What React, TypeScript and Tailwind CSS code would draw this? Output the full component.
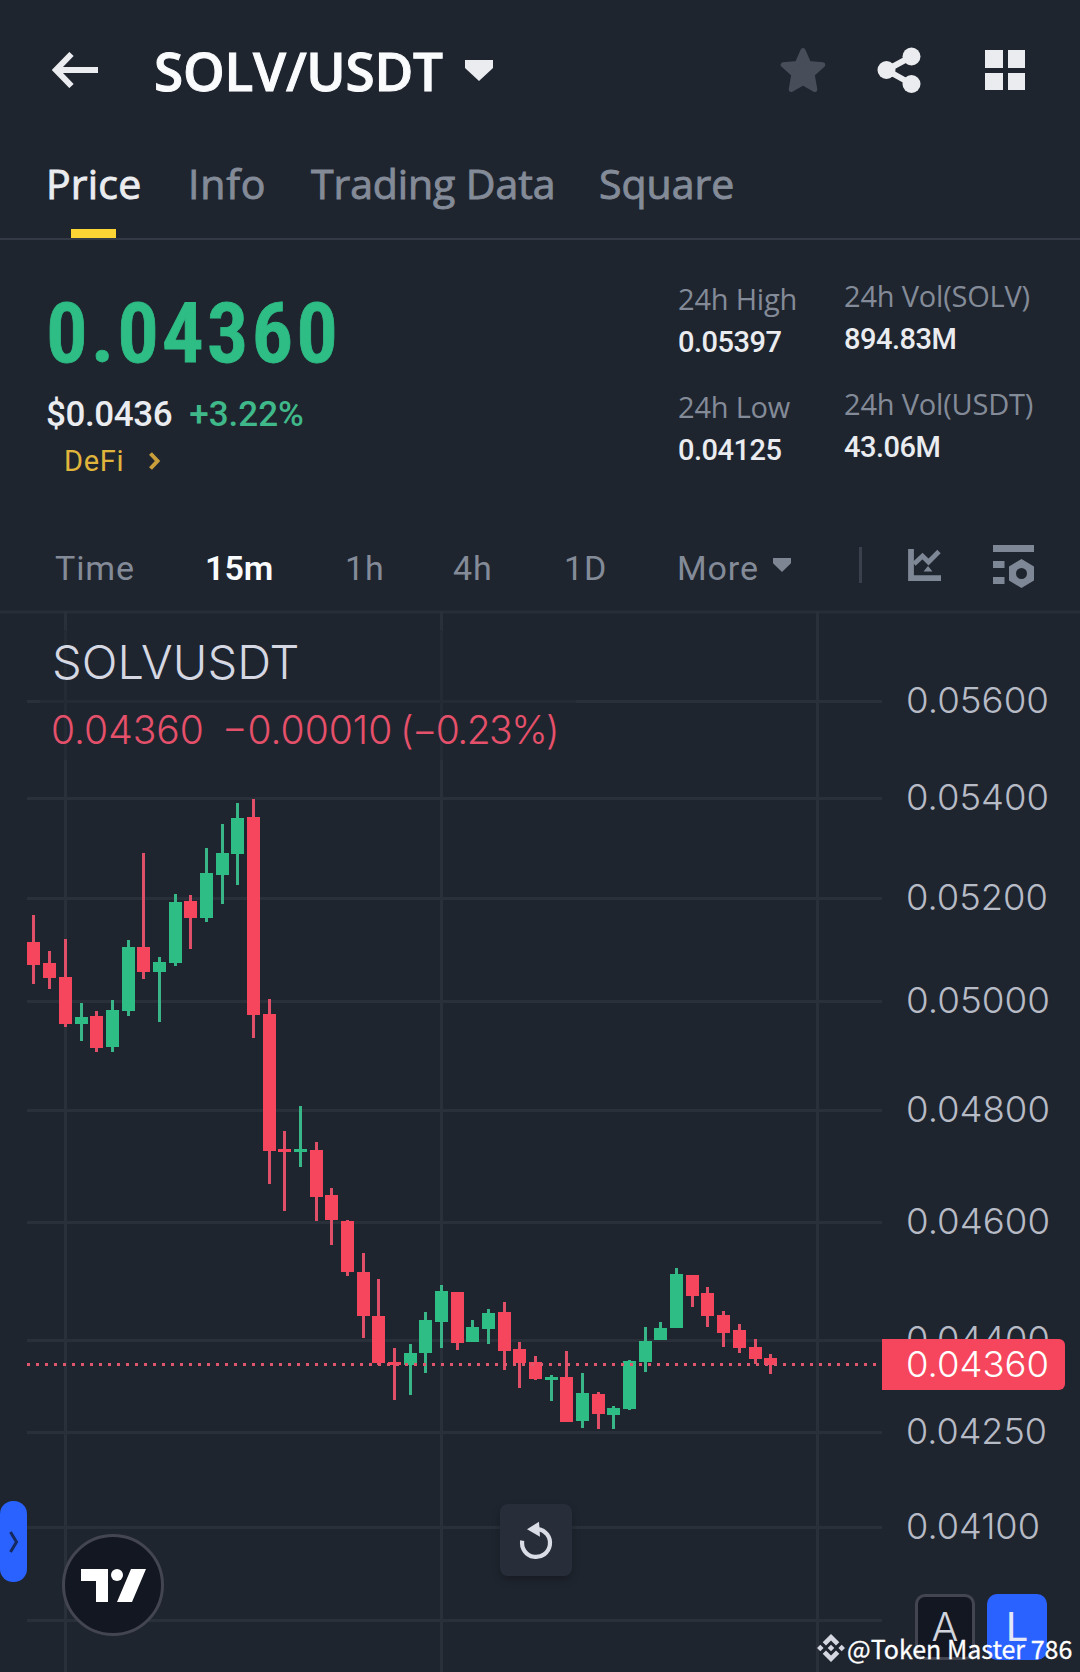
import React from "react";

type Candle = [number, "r" | "g", number, number, number, number];

// center x, direction, high, body top, body bottom, low
const candles: Candle[] = [
  [33.5, "r", 915, 942, 965, 984],
  [49.5, "r", 951, 963, 978, 989],
  [65.5, "r", 939, 977, 1024, 1027],
  [81.5, "g", 1003, 1017, 1024, 1041],
  [96.5, "r", 1011, 1016, 1048, 1052],
  [112.5, "g", 1000, 1010, 1047, 1052],
  [128.5, "g", 940, 947, 1011, 1016],
  [143.5, "r", 853, 947, 972, 979],
  [159.5, "g", 957, 962, 972, 1022],
  [175.5, "g", 894, 902, 963, 966],
  [190.5, "r", 895, 901, 918, 949],
  [206.5, "g", 848, 873, 918, 922],
  [222.5, "g", 824, 853, 875, 904],
  [237.5, "g", 803, 818, 854, 885],
  [253.5, "r", 799, 817, 1015, 1038],
  [269.5, "r", 999, 1014, 1151, 1184],
  [284.5, "r", 1131, 1149, 1152, 1211],
  [300.5, "g", 1106, 1149, 1152, 1167],
  [316.5, "r", 1142, 1150, 1197, 1221],
  [331.5, "r", 1188, 1195, 1220, 1245],
  [347.5, "r", 1220, 1221, 1272, 1276],
  [363.5, "r", 1253, 1272, 1316, 1338],
  [378.5, "r", 1279, 1316, 1363, 1365],
  [394.5, "r", 1348, 1362, 1365, 1400],
  [410.5, "g", 1344, 1353, 1365, 1395],
  [425.5, "g", 1312, 1320, 1353, 1373],
  [441.5, "g", 1285, 1291, 1322, 1348],
  [457.5, "r", 1292, 1292, 1343, 1350],
  [472.5, "g", 1320, 1327, 1342, 1342],
  [488.5, "g", 1309, 1313, 1329, 1344],
  [504.5, "r", 1302, 1312, 1351, 1370],
  [519.5, "r", 1342, 1349, 1363, 1388],
  [535.5, "r", 1356, 1362, 1379, 1380],
  [551.5, "g", 1375, 1377, 1380, 1401],
  [566.5, "r", 1351, 1377, 1422, 1422],
  [582.5, "g", 1373, 1393, 1421, 1428],
  [598.5, "r", 1392, 1394, 1414, 1429],
  [613.5, "g", 1406, 1408, 1415, 1429],
  [629.5, "g", 1360, 1361, 1409, 1410],
  [645.5, "g", 1327, 1341, 1362, 1372],
  [660.5, "g", 1322, 1328, 1340, 1340],
  [676.5, "g", 1268, 1274, 1328, 1328],
  [692.5, "r", 1275, 1275, 1296, 1307],
  [707.5, "r", 1287, 1293, 1316, 1327],
  [723.5, "r", 1311, 1315, 1333, 1347],
  [739.5, "r", 1324, 1330, 1348, 1353],
  [755.5, "r", 1339, 1347, 1359, 1364],
  [770.5, "r", 1354, 1358, 1365, 1374],
];

const levels: { y: number; label?: string; w?: number }[] = [
  { y: 701, label: "0.05600", w: 143 },
  { y: 798.5, label: "0.05400", w: 143 },
  { y: 898.5, label: "0.05200", w: 142 },
  { y: 1001.5, label: "0.05000", w: 144 },
  { y: 1110.5, label: "0.04800", w: 144 },
  { y: 1222.5, label: "0.04600", w: 144 },
  { y: 1340.5, label: "0.04400", w: 144 },
  { y: 1432.5, label: "0.04250", w: 141 },
  { y: 1527.5, label: "0.04100", w: 134 },
  { y: 1620 },
];

function Caret({ className }: { className: string }) {
  return (
    <svg viewBox="0 0 28 21" className={className} fill="currentColor" preserveAspectRatio="none">
      <path d="M0 0H28V8L14 21L0 8Z" />
    </svg>
  );
}

function Header() {
  return (
    <header className="flex h-[140px] items-center pl-[52px] pr-[55px]">
      <svg viewBox="0 0 46 36" className="h-9 w-[46px] shrink-0" fill="none" stroke="#eaecef" strokeWidth="6">
        <path d="M19.5 2L4 18L19.5 34M4 18H46" />
      </svg>
      <h1 className="ml-[56px] w-[311px] whitespace-nowrap pt-px font-['Open_Sans'] text-[53px] font-semibold leading-[72px] tracking-[-0.2px] text-[#fafbfd] [-webkit-text-stroke:1px_#fafbfd]">
        SOLV/USDT
      </h1>
      <Caret className="h-[21px] w-7 text-[#eaecef]" />
      <div className="ml-auto flex items-center">
        <svg viewBox="0 0 46 46" className="h-[46px] w-[46px]" fill="#474d59" stroke="#474d59" strokeWidth="5" strokeLinejoin="round">
          <path d="M23 3.5L28.7 16.4L42.8 17.8L32.2 27.3L34.8 42.5L23 35.8L11.2 42.5L13.8 27.3L3.2 17.8L17.3 16.4Z" />
        </svg>
        <svg viewBox="0 0 44 46" className="ml-[51px] h-[46px] w-11" fill="#eaecef">
          <path d="M34.5 9.5L9.5 23L34.5 37" fill="none" stroke="#eaecef" strokeWidth="6" />
          <circle cx="34.5" cy="9.5" r="9" />
          <circle cx="9.5" cy="23" r="9" />
          <circle cx="34.5" cy="37" r="9" />
        </svg>
        <div className="ml-[64px] grid h-10 w-10 grid-cols-2 gap-[5px]">
          <i className="bg-[#eaecef]" />
          <i className="bg-[#eaecef]" />
          <i className="bg-[#eaecef]" />
          <i className="bg-[#eaecef]" />
        </div>
      </div>
    </header>
  );
}

function Tabs() {
  return (
    <nav className="flex h-[100px] border-b-2 border-[#333a46] pl-[46px] font-['Open_Sans'] text-[41px] font-normal leading-[87px] text-[#848b98] [-webkit-text-stroke:0.9px_currentColor]">
      <div className="flex w-[142px] flex-col whitespace-nowrap text-[#eaecef]">
        <span className="h-[89px] tracking-[0.2px]">Price</span>
        <i className="ml-[25px] h-[9px] w-[45px] bg-[#fcd535]" />
      </div>
      <span className="w-[123px] tracking-[0.8px]">Info</span>
      <span className="w-[288px] whitespace-nowrap tracking-[-0.1px]">Trading Data</span>
      <span>Square</span>
    </nav>
  );
}

function Stat({ label, value }: { label: string; value: string }) {
  return (
    <div className="h-[108px] whitespace-nowrap">
      <div className="font-['Open_Sans'] text-[29px] leading-10 tracking-[-0.2px] text-[#848b98]">{label}</div>
      <div className="mt-[3px] font-[Roboto] text-[29px] font-medium leading-10 tracking-[-0.5px] text-[#eaecef]">{value}</div>
    </div>
  );
}

function Summary() {
  return (
    <section className="flex h-[286px] pl-[46px]">
      <div className="w-[632px] pt-[50px] font-[Roboto]">
        <div className="text-[83px] font-semibold leading-[88px] tracking-[3px] text-[#2ebd85] [font-stretch:75%] [-webkit-text-stroke:0.8px_#2ebd85]">0.04360</div>
        <div className="mt-[15px] flex gap-[17px] text-[35px] font-medium leading-[44px] tracking-[-0.4px]">
          <span className="text-[#eaecef]">$0.0436</span>
          <span className="tracking-[0px] text-[#3fb98a]">+3.22%</span>
        </div>
        <div className="ml-[18px] mt-2 flex items-center text-[29px] leading-8 tracking-[0.7px] text-[#e0b53c]">
          DeFi
          <svg viewBox="0 0 12 18" className="ml-[25px] h-[18px] w-3" fill="none" stroke="#c99f3c" strokeWidth="4">
            <path d="M1.5 1.5L8.5 9L1.5 16.5" />
          </svg>
        </div>
      </div>
      <div className="w-[166px] pt-[39px]">
        <Stat label="24h High" value="0.05397" />
        <Stat label="24h Low" value="0.04125" />
      </div>
      <div className="pt-9">
        <Stat label="24h Vol(SOLV)" value="894.83M" />
        <Stat label="24h Vol(USDT)" value="43.06M" />
      </div>
    </section>
  );
}

function Intervals() {
  return (
    <div className="flex h-[84px] whitespace-nowrap pl-[55px] font-[Roboto] text-[34px] leading-[84px] tracking-[0.9px] text-[#848b98]">
      <span className="w-[150px]">Time</span>
      <span className="w-[140px] font-semibold tracking-[0px] text-[#fafbfd]">15m</span>
      <span className="w-[108px]">1h</span>
      <span className="w-[111px]">4h</span>
      <span className="w-[113px]">1D</span>
      <span className="w-[96px]">More</span>
      <Caret className="mt-8 h-[14px] w-[18px] text-[#7e8593]" />
      <i className="ml-[68px] mt-[21px] h-9 w-[3px] bg-[#3a404c]" />
      <svg viewBox="0 0 33 32" className="ml-[46px] mt-[23px] h-8 w-[33px]" fill="none" stroke="#7e8795" strokeWidth="5.8">
        <path d="M3 0V29.2H33" />
        <path d="M6 15L14.5 7L20.5 13L31 2.5" strokeWidth="4.8" />
        <path d="M15.5 22.5L20 17L24.5 22.5Z" fill="#7e8795" stroke="none" />
      </svg>
      <svg viewBox="0 0 42 43" className="ml-[52px] mt-[19px] h-[43px] w-[42px]" fill="#7e8795">
        <path d="M0 0H41V7H0ZM0 16H11.5V23H0ZM0 32H11.5V39H0Z" />
        <path fillRule="evenodd" d="M28.5 14L41 21.5V35.5L28.5 43L16 35.5V21.5ZM28.5 23A5.5 5.5 0 1 0 28.5 34A5.5 5.5 0 1 0 28.5 23Z" />
      </svg>
    </div>
  );
}

function Chart() {
  return (
    <section className="relative h-[1062px] overflow-hidden">
      <svg viewBox="0 610 1080 1062" className="block h-[1062px] w-[1080px]">
        <g fill="#2a3039">
          <rect x="0" y="610.5" width="1080" height="3" fill="#272e37" />
          <rect x="64" y="611" width="3" height="1061" />
          <rect x="440" y="611" width="3" height="1061" />
          <rect x="816" y="611" width="3" height="1061" />
          {levels.map((l) => (
            <rect key={l.y} x="27" y={Math.round(l.y - 1.5)} width="855" height="3" />
          ))}
        </g>
        <rect x="40" y="630" width="536" height="130" fill="#1f252f" opacity="0.5" />
        {candles.map(([x, dir, high, top, bottom, low]) => (
          <g key={x}>
            <rect x={x - 1.5} y={high} width="3" height={low - high} fill={dir === "r" ? "#e04f68" : "#39b688"} />
            <rect x={x - 6.5} y={top} width="13" height={bottom - top} fill={dir === "r" ? "#f6465d" : "#2ebd85"} />
          </g>
        ))}
        <path d="M27 1364.5H880" stroke="#e0566c" strokeWidth="3" strokeDasharray="3 6" />
        <g className="font-[Inter] text-[36px] font-light" fill="#b7bbc6">
          {levels.map((l) =>
            l.label ? (
              <text key={l.label} x="906" y={l.y + 11.5} textLength={l.w} lengthAdjust="spacingAndGlyphs">
                {l.label}
              </text>
            ) : null,
          )}
          <path d="M882 1339H1059A6 6 0 0 1 1065 1345V1384A6 6 0 0 1 1059 1390H882Z" fill="#f6465d" />
          <text x="906" y="1377" textLength="143" lengthAdjust="spacingAndGlyphs" fill="#ffffff">
            0.04360
          </text>
        </g>
      </svg>

      <div className="absolute left-[52px] top-[20px] whitespace-nowrap font-[Inter] font-light">
        <div className="text-[47px] leading-[64px] tracking-[0.1px] text-[#d5d8e2]">SOLVUSDT</div>
        <div className="mt-[6px] flex text-[39px] leading-[60px] text-[#e5506a]">
          <span className="ml-[-1px] w-[171px]">0.04360</span>
          <span className="w-[178px]">−0.00010</span>
          <span className="tracking-[-1.6px]">(−0.23%)</span>
        </div>
      </div>

      <div className="absolute left-0 top-[891px] flex h-[81px] w-[27px] items-center justify-center rounded-[13px] bg-[#2962ff]">
        <svg viewBox="0 0 10 22" className="h-[22px] w-[10px]" fill="none" stroke="#16295e" strokeWidth="3">
          <path d="M1.5 1L7.5 11L1.5 21" />
        </svg>
      </div>

      <div className="absolute left-[62px] top-[924px] flex h-[102px] w-[102px] items-center justify-center rounded-full border-[3px] border-[#434651] bg-[#131722]">
        <svg viewBox="0 0 65 33" className="h-[33px] w-[65px]" fill="#fff">
          <path d="M0 0H27V33H15V12H0ZM50 0H65L51 33H36Z" />
          <circle cx="36" cy="6" r="6" />
        </svg>
      </div>

      <div className="absolute left-[500px] top-[894px] flex h-[72px] w-[72px] items-center justify-center rounded-lg bg-[#282e39] shadow-[0_4px_8px_rgba(0,0,0,0.25)]">
        <svg viewBox="500 1504 72 72" className="h-[72px] w-[72px]" fill="none" stroke="#dadde6" strokeWidth="4.2">
          <path d="M522.2 1540.7A14 14 0 1 0 538 1529.1" />
          <path d="M527 1529.3L539 1521.7L540 1536.7Z" fill="#dadde6" stroke="none" />
        </svg>
      </div>

      <div className="absolute left-[915px] top-[984px] flex gap-3 text-center font-[Inter] text-[40px] font-light text-[#d1d4dc]">
        <div className="h-[66px] w-[60px] rounded-[10px] border-[3px] border-[#434651] bg-[#131722] leading-[60px]">A</div>
        <div className="h-[66px] w-[60px] rounded-[10px] bg-[#2962ff] font-normal leading-[66px] text-[#e4e8f6]">L</div>
      </div>

      <div className="absolute left-[817px] top-[1024px] flex items-center whitespace-nowrap">
        <svg viewBox="0 0 28 28" className="h-7 w-7" fill="#d4d7e0">
          <path d="M14 0L22.3 8.3L19 11.6L14 6.6L9 11.6L5.7 8.3ZM14 28L22.3 19.7L19 16.4L14 21.4L9 16.4L5.7 19.7ZM14 10.7L17.3 14L14 17.3L10.7 14ZM3.3 10.7L6.6 14L3.3 17.3L0 14ZM24.7 10.7L28 14L24.7 17.3L21.4 14Z" />
        </svg>
        <span className="ml-[2px] font-['Noto_Sans_CJK_SC'] text-[25px] leading-7 text-white [-webkit-text-stroke:0.3px_#ffffff]">@Token Master 786</span>
      </div>
    </section>
  );
}

export default function App() {
  return (
    <main className="h-[1672px] w-[1080px] overflow-hidden bg-[#1f252f]">
      <Header />
      <Tabs />
      <Summary />
      <Intervals />
      <Chart />
    </main>
  );
}
